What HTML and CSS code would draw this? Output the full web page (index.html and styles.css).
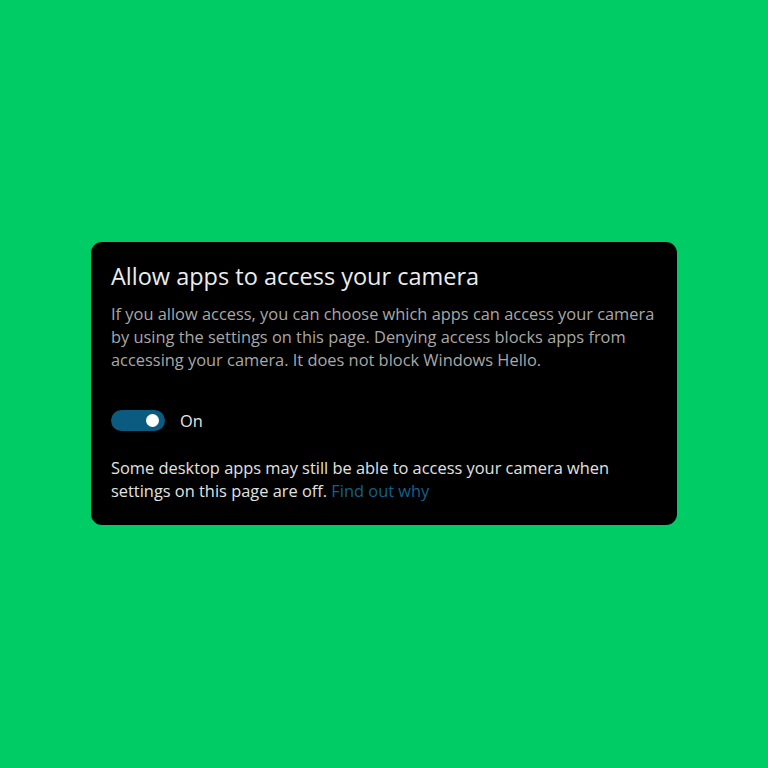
FILE: index.html
```html
<!DOCTYPE html>
<html lang="en">
<head>
<meta charset="utf-8">
<link rel="stylesheet" href="styles.css">
</head>
<body>
<div class="stage">
  <section class="card">
    <h1 class="title">Allow apps to access your camera</h1>
    <p class="desc">If you allow access, you can choose which apps can access your camera<br>by using the settings on this page. Denying access blocks apps from<br>accessing your camera. It does not block Windows Hello.</p>
    <div class="toggle-row">
      <span class="toggle"><span class="knob"></span></span>
      <span class="toggle-label">On</span>
    </div>
    <p class="note">Some desktop apps may still be able to access your camera when<br>settings on this page are off. <a class="link" href="#">Find out why</a></p>
  </section>
</div>
</body>
</html>
```

FILE: styles.css
```css
html, body {
  margin: 0;
  padding: 0;
}
body {
  background: #00cc66;
  font-family: "Open Sans", "Noto Sans", sans-serif;
  width: 768px;
  height: 768px;
  overflow: hidden;
}
.stage {
  padding-top: 242px;
  padding-left: 91px;
}
.card {
  box-sizing: border-box;
  width: 586px;
  height: 283px;
  background: #000;
  border-radius: 11px;
  padding: 19px 20px 0 20px;
}
.title {
  margin: 0;
  font-size: 23.5px;
  line-height: 30px;
  font-weight: 400;
  color: #ececec;
}
.desc {
  margin: 11px 0 0 0;
  font-size: 16.4px;
  line-height: 23px;
  color: #a8a8a8;
}
.toggle-row {
  display: flex;
  align-items: center;
  gap: 15px;
  margin-top: 39px;
  height: 21px;
}
.toggle {
  box-sizing: border-box;
  width: 54px;
  height: 21px;
  border-radius: 11px;
  background: #0b5a80;
  display: flex;
  align-items: center;
  justify-content: flex-end;
  padding-right: 6px;
}
.knob {
  width: 13px;
  height: 13px;
  border-radius: 50%;
  background: #fff;
}
.toggle-label {
  font-size: 16.4px;
  color: #e6e6e6;
}
.note {
  margin: 25px 0 0 0;
  font-size: 16.4px;
  line-height: 23px;
  color: #e2e2e2;
}
.link {
  color: #14608c;
  text-decoration: none;
}
```
